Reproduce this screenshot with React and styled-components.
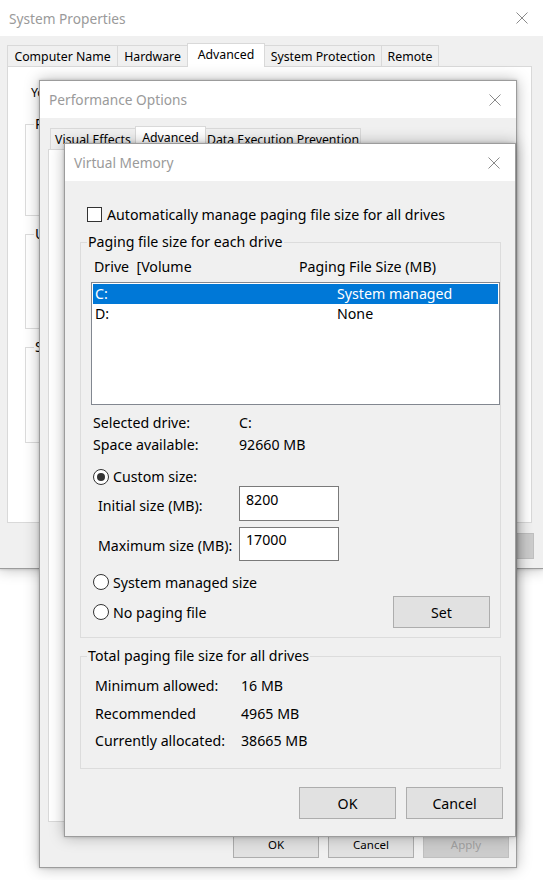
import styled, { createGlobalStyle } from 'styled-components'

const GlobalStyle = createGlobalStyle`
  html, body {
    margin: 0;
    padding: 0;
    background: #fff;
  }
  body {
    font-family: "Noto Sans", "Open Sans", sans-serif;
    font-size: 14.2px;
    color: #000;
  }
  * {
    box-sizing: border-box;
  }
`

const Desktop = styled.div`
  position: relative;
  width: 543px;
  height: 880px;
  overflow: hidden;
  background: #fff;
`

// windows sit on the desktop at their own coordinates
const Window = styled.div`
  position: absolute;
  isolation: isolate;
  left: ${p => p.$x}px;
  top: ${p => p.$y}px;
  width: ${p => p.$w}px;
  height: ${p => p.$h}px;
  display: flex;
  flex-direction: column;
  background: #f0f0f0;
  border: 1px solid #9c9c9c;
  box-shadow: 0 0 14px rgba(0, 0, 0, 0.28), 0 0 3px rgba(0, 0, 0, 0.2);
`

const TitleBar = styled.div`
  flex: none;
  height: ${p => p.$h}px;
  display: flex;
  align-items: center;
  justify-content: space-between;
  padding: 0 15px 0 ${p => p.$pl}px;
  background: #fff;
`

const Title = styled.span`
  color: #9a9a9a;
  font-size: 13.7px;
`

const CloseGlyph = () => (
  <svg width="12" height="12" viewBox="0 0 12 12">
    <path d="M0.5 0.5 L11.5 11.5 M11.5 0.5 L0.5 11.5" stroke="#8a8a8a" strokeWidth="1" fill="none" />
  </svg>
)

const Body = styled.div`
  flex: 1;
  display: flex;
  flex-direction: column;
  padding: ${p => p.$pad};
`

const TabStrip = styled.div`
  display: flex;
  align-items: flex-end;
  height: 24px;
  margin: 0 0 -1px ${p => p.$ml || 0}px;
  position: relative;
`

const Tab = styled.div`
  position: relative;
  z-index: ${p => (p.$active ? 2 : 0)};
  width: ${p => p.$w}px;
  height: ${p => (p.$active ? 24 : 22)}px;
  display: flex;
  align-items: center;
  justify-content: center;
  padding-bottom: ${p => (p.$active ? 3 : 0)}px;
  font-size: 12.3px;
  background: ${p => (p.$active ? '#fff' : '#f0f0f0')};
  border: 1px solid #d9d9d9;
  border-bottom: ${p => (p.$active ? 'none' : '1px solid #d9d9d9')};
  margin-left: -1px;
  white-space: nowrap;
  &:first-child {
    margin-left: 0;
  }
`

const TabPanel = styled.div`
  position: relative;
  z-index: 1;
  height: ${p => p.$h}px;
  background: #fff;
  border: 1px solid #d9d9d9;
  padding: ${p => p.$pad || 0};
  display: flex;
  flex-direction: column;
`

const Group = styled.fieldset`
  margin: ${p => p.$mt || 0}px 0 0 0;
  height: ${p => (p.$h ? `${p.$h}px` : 'auto')};
  padding: 0 ${p => p.$pr || 0}px ${p => p.$pb || 0}px ${p => p.$pl || 0}px;
  border: 1px solid #dcdcdc;
  min-width: 0;
`

const Legend = styled.legend`
  padding: 0 1px;
  margin-left: ${p => p.$ml || 0}px;
  line-height: 20px;
`

const Line = styled.div`
  line-height: 20px;
  font-size: 12.3px;
  white-space: nowrap;
  padding-left: ${p => p.$pl || 0}px;
`

const CheckRow = styled.label`
  display: flex;
  align-items: center;
  gap: 5px;
  height: 20px;
  margin: ${p => p.$mt}px 0 0 7px;
  white-space: nowrap;
`

const CheckBox = styled.span`
  width: 15px;
  height: 15px;
  flex: none;
  background: #fff;
  border: 1px solid #333;
`

const RadioRow = styled.label`
  display: flex;
  align-items: center;
  gap: 4px;
  height: 20px;
  margin: ${p => p.$mt || 0}px 0 0 2px;
  white-space: nowrap;
`

const RadioDot = styled.span`
  position: relative;
  width: 16px;
  height: 16px;
  flex: none;
  border-radius: 50%;
  background: #fff;
  border: 1px solid #333;
  &::after {
    content: '';
    display: ${p => (p.$checked ? 'block' : 'none')};
    position: absolute;
    left: 3px;
    top: 3px;
    width: 8px;
    height: 8px;
    border-radius: 50%;
    background: #333;
  }
`

const ColumnHeader = styled.div`
  display: grid;
  grid-template-columns: 205px 1fr;
  line-height: 20px;
  margin-top: 5px;
  padding-left: 3px;
  white-space: nowrap;
`

const ListBox = styled.div`
  height: 123px;
  margin-top: 5px;
  background: #fff;
  border: 1px solid #828790;
  padding: 1px;
`

const ListRow = styled.div`
  display: grid;
  grid-template-columns: 242px 1fr;
  height: 20px;
  line-height: 20px;
  padding-left: 2px;
  background: ${p => (p.$selected ? '#0078d7' : 'transparent')};
  color: ${p => (p.$selected ? '#fff' : '#000')};
  white-space: nowrap;
`

const InfoGrid = styled.div`
  display: grid;
  grid-template-columns: ${p => p.$col}px 1fr;
  row-gap: ${p => p.$gap}px;
  line-height: 20px;
  margin-top: ${p => p.$mt}px;
  padding-left: ${p => p.$pl}px;
  white-space: nowrap;
`

const SizeRow = styled.div`
  display: flex;
  align-items: center;
  margin-top: ${p => p.$mt || 0}px;
`

const SizeLabel = styled.span`
  width: 148px;
  padding: 3px 0 0 7px;
  white-space: nowrap;
`

const SizeInput = styled.input`
  width: 100px;
  height: ${p => p.$h}px;
  padding: 0 0 8px 6px;
  border: 1px solid #7a7a7a;
  background: #fff;
  font: inherit;
  color: #000;
  outline: none;
`

const ActionRow = styled.div`
  display: flex;
  align-items: center;
  justify-content: space-between;
  height: 32px;
  margin-top: 4px;
  padding-right: 10px;
`

const ButtonRow = styled.div`
  display: flex;
  justify-content: flex-end;
  gap: ${p => p.$gap}px;
  margin: ${p => p.$mt}px ${p => p.$mr || 0}px 0 0;
`

const Button = styled.button`
  width: ${p => p.$w}px;
  height: ${p => p.$h}px;
  padding: 0;
  font-family: inherit;
  font-size: ${p => p.$fs || 14.2}px;
  color: ${p => (p.$disabled ? '#a0a0a0' : '#000')};
  background: ${p => (p.$disabled ? '#cccccc' : '#e1e1e1')};
  border: 1px solid ${p => (p.$disabled ? '#bfbfbf' : '#adadad')};
`

const SystemProperties = () => (
  <Window $x={-1} $y={-1} $w={545} $h={570}>
    <TitleBar $h={36} $pl={9}>
      <Title>System Properties</Title>
      <CloseGlyph />
    </TitleBar>
    <Body $pad="7px 11px 0 7px">
      <TabStrip>
        <Tab $w={111}>Computer Name</Tab>
        <Tab $w={71}>Hardware</Tab>
        <Tab $w={78} $active>Advanced</Tab>
        <Tab $w={118}>System Protection</Tab>
        <Tab $w={58}>Remote</Tab>
      </TabStrip>
      <TabPanel $h={457} $pad="16px 17px 0 17px">
        <Line $pl={6}>You must be logged on as an Administrator to make most of these changes.</Line>
        <Group $mt={11} $h={102}>
          <Legend $ml={8}>Performance</Legend>
        </Group>
        <Group $mt={8} $h={105}>
          <Legend $ml={8}>User Profiles</Legend>
        </Group>
        <Group $mt={8} $h={106}>
          <Legend $ml={8}>Startup and Recovery</Legend>
        </Group>
      </TabPanel>
      <ButtonRow $gap={9} $mt={10} $mr={-2}>
        <Button $w={88} $h={26}>OK</Button>
        <Button $w={88} $h={26}>Cancel</Button>
        <Button $w={88} $h={26} $disabled>Apply</Button>
      </ButtonRow>
    </Body>
  </Window>
)

const PerformanceOptions = () => (
  <Window $x={39} $y={80} $w={478} $h={788}>
    <TitleBar $h={37} $pl={9}>
      <Title>Performance Options</Title>
      <CloseGlyph />
    </TitleBar>
    <Body $pad="8px 8px 0 8px">
      <TabStrip $ml={2}>
        <Tab $w={86}>Visual Effects</Tab>
        <Tab $w={71} $active>Advanced</Tab>
        <Tab $w={156}>Data Execution Prevention</Tab>
      </TabStrip>
      <TabPanel $h={673} />
      <ButtonRow $gap={9} $mt={8} $mr={-1}>
        <Button $w={86} $h={28} $fs={11.5}>OK</Button>
        <Button $w={86} $h={28} $fs={11.5}>Cancel</Button>
        <Button $w={86} $h={28} $fs={11.5} $disabled>Apply</Button>
      </ButtonRow>
    </Body>
  </Window>
)

const VirtualMemory = () => (
  <Window $x={64} $y={143} $w={452} $h={694}>
    <TitleBar $h={37} $pl={9}>
      <Title>Virtual Memory</Title>
      <CloseGlyph />
    </TitleBar>
    <Body $pad="0 14px 0 15px">
      <CheckRow $mt={23}>
        <CheckBox />
        Automatically manage paging file size for all drives
      </CheckRow>

      <Group $mt={8} $pl={10} $pb={9}>
        <Legend $ml={-4}>Paging file size for each drive</Legend>
        <ColumnHeader>
          <span>Drive&nbsp;&nbsp;[Volume</span>
          <span>Paging File Size (MB)</span>
        </ColumnHeader>
        <ListBox>
          <ListRow $selected>
            <span>C:</span>
            <span>System managed</span>
          </ListRow>
          <ListRow>
            <span>D:</span>
            <span>None</span>
          </ListRow>
        </ListBox>
        <InfoGrid $col={146} $gap={2.5} $mt={7.5} $pl={2}>
          <span>Selected drive:</span>
          <span>C:</span>
          <span>Space available:</span>
          <span>92660 MB</span>
        </InfoGrid>
        <RadioRow $mt={11.5}>
          <RadioDot $checked />
          Custom size:
        </RadioRow>
        <SizeRow $mt={-0.5}>
          <SizeLabel>Initial size (MB):</SizeLabel>
          <SizeInput $h={35} readOnly value="8200" />
        </SizeRow>
        <SizeRow $mt={5.5}>
          <SizeLabel>Maximum size (MB):</SizeLabel>
          <SizeInput $h={34} readOnly value="17000" />
        </SizeRow>
        <RadioRow $mt={11.5}>
          <RadioDot />
          System managed size
        </RadioRow>
        <ActionRow>
          <RadioRow>
            <RadioDot />
            No paging file
          </RadioRow>
          <Button $w={97} $h={32}>Set</Button>
        </ActionRow>
      </Group>

      <Group $mt={8} $pl={14} $pb={17}>
        <Legend $ml={-8}>Total paging file size for all drives</Legend>
        <InfoGrid $col={146} $gap={7.5} $mt={10} $pl={0}>
          <span>Minimum allowed:</span>
          <span>16 MB</span>
          <span>Recommended</span>
          <span>4965 MB</span>
          <span>Currently allocated:</span>
          <span>38665 MB</span>
        </InfoGrid>
      </Group>

      <ButtonRow $gap={10} $mt={18} $mr={-2}>
        <Button $w={97} $h={32}>OK</Button>
        <Button $w={97} $h={32}>Cancel</Button>
      </ButtonRow>
    </Body>
  </Window>
)

export default function App() {
  return (
    <>
      <GlobalStyle />
      <Desktop>
        <SystemProperties />
        <PerformanceOptions />
        <VirtualMemory />
      </Desktop>
    </>
  )
}
